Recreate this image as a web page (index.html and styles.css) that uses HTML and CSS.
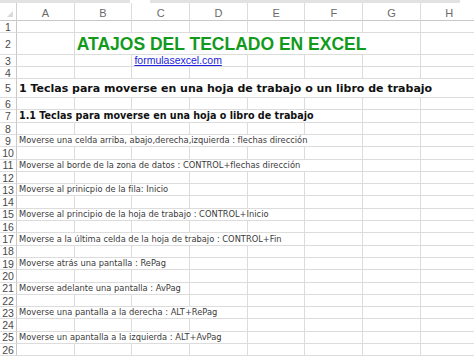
FILE: index.html
```html
<!DOCTYPE html>
<html lang="es">
<head>
    <meta charset="UTF-8">
    <meta name="viewport" content="width=device-width, initial-scale=1.0">
    <title>Atajos del teclado en Excel</title>
    <link rel="stylesheet" href="styles.css">
</head>
<body>
    <div class="sheet">
        <div class="toolbar">
            <span class="tb-part tb-left"></span>
            <span class="tb-gap"></span>
            <span class="tb-part tb-right"></span>
        </div>
        <div class="grid" id="grid"></div>
    </div>

    <script>
        const columns = ['A', 'B', 'C', 'D', 'E', 'F', 'G', 'H'];
        const content = {
            2: { col: 2, span: 6, cls: 'title', text: 'ATAJOS DEL TECLADO EN EXCEL' },
            3: { col: 3, span: 2, cls: 'link', text: 'formulasexcel.com' },
            5: { col: 1, span: 8, cls: 'h1', text: '1 Teclas para moverse en una hoja de trabajo o un libro de trabajo' },
            7: { col: 1, span: 6, cls: 'h2', text: '1.1 Teclas para moverse en una hoja o libro de trabajo' },
            9: { col: 1, span: 6, cls: 'txt', text: 'Moverse una celda arriba, abajo,derecha,izquierda : flechas dirección' },
            11: { col: 1, span: 6, cls: 'txt', text: 'Moverse al borde de la zona de datos : CONTROL+flechas dirección' },
            13: { col: 1, span: 3, cls: 'txt', text: 'Moverse al prinicpio de la fila: Inicio' },
            15: { col: 1, span: 5, cls: 'txt', text: 'Moverse al principio de la hoja de trabajo : CONTROL+Inicio' },
            17: { col: 1, span: 5, cls: 'txt', text: 'Moverse a la última celda de la hoja de trabajo : CONTROL+Fin' },
            19: { col: 1, span: 3, cls: 'txt', text: 'Moverse atrás una pantalla : RePag' },
            21: { col: 1, span: 3, cls: 'txt', text: 'Moverse adelante una pantalla : AvPag' },
            23: { col: 1, span: 4, cls: 'txt', text: 'Moverse una pantalla a la derecha : ALT+RePag' },
            25: { col: 1, span: 4, cls: 'txt', text: 'Moverse un apantalla a la izquierda : ALT+AvPag' }
        };
        const grid = document.getElementById('grid');

        function addCell(className, text) {
            const cell = document.createElement('div');
            cell.className = className;
            if (text) {
                const span = document.createElement('span');
                span.textContent = text;
                cell.appendChild(span);
            }
            grid.appendChild(cell);
            return cell;
        }

        // cabecera de columnas
        addCell('corner');
        columns.forEach(letter => addCell('col-head', letter));

        // filas
        for (let r = 1; r <= 26; r++) {
            addCell('row-head', String(r));
            let c = 1;
            while (c <= columns.length) {
                const item = content[r];
                if (item && item.col === c) {
                    const cell = addCell('cell ' + item.cls, item.text);
                    cell.style.gridColumn = 'span ' + item.span;
                    c += item.span;
                } else {
                    addCell('cell');
                    c++;
                }
            }
        }
    </script>
</body>
</html>
```

FILE: styles.css
```css
body {
    margin: 0;
    background: #fff;
    overflow: hidden;
}
.sheet {
    width: 474px;
    height: 356px;
    overflow: hidden;
}
.toolbar {
    display: flex;
    height: 3px;
}
.tb-part {
    background: #e2e2e2;
}
.tb-left {
    width: 130px;
}
.tb-gap {
    width: 20px;
}
.tb-right {
    width: 310px;
}
.grid {
    display: grid;
    grid-template-columns: 17px repeat(8, 57.7px);
    grid-template-rows: 18px 12px 22px 12px 12px 19px 12px 13px 12px repeat(18, 12.3px);
}
.corner {
    position: relative;
    box-sizing: border-box;
    border-right: 1px solid #d0d0d0;
    border-bottom: 1px solid #c8c8c8;
}
.corner::after {
    content: "";
    position: absolute;
    right: 3px;
    bottom: 3px;
    border-left: 6px solid transparent;
    border-bottom: 6px solid #dadada;
}
.col-head {
    box-sizing: border-box;
    border-right: 1px solid #dcdcdc;
    border-bottom: 1px solid #c8c8c8;
    display: flex;
    justify-content: center;
    align-items: center;
    padding-top: 2px;
    font-family: "Liberation Sans", Arial, sans-serif;
    font-size: 11px;
    color: #6a6a6a;
}
.row-head {
    box-sizing: border-box;
    border-right: 1px solid #c8c8c8;
    border-bottom: 1px solid #dedede;
    display: flex;
    justify-content: center;
    align-items: center;
    font-family: "Liberation Sans", Arial, sans-serif;
    font-size: 10.5px;
    color: #4a4a4a;
    overflow: hidden;
}
.cell {
    box-sizing: border-box;
    border-right: 1px solid #dcdcdc;
    border-bottom: 1px solid #dcdcdc;
    display: flex;
    align-items: flex-end;
    padding-left: 2px;
    white-space: nowrap;
    overflow: hidden;
    min-width: 0;
}
.title {
    font-family: "Liberation Sans", Arial, sans-serif;
    font-weight: bold;
    font-size: 17.5px;
    line-height: 18px;
    color: #129a1c;
    padding-bottom: 1px;
}
.link {
    font-family: "Liberation Sans", Arial, sans-serif;
    font-size: 10.5px;
    color: #2222dd;
    line-height: 11px;
}
.link span {
    text-decoration: underline;
    text-underline-offset: 1px;
}
.h1 {
    font-family: "DejaVu Sans", Verdana, sans-serif;
    font-weight: bold;
    font-size: 11px;
    color: #111;
    padding-bottom: 2px;
}
.h2 {
    font-family: "DejaVu Sans", Verdana, sans-serif;
    font-weight: bold;
    font-size: 9.6px;
    color: #111;
    line-height: 12px;
}
.txt {
    font-family: "DejaVu Sans", Verdana, sans-serif;
    font-size: 8.3px;
    color: #3a3a3a;
    line-height: 11px;
}
```
